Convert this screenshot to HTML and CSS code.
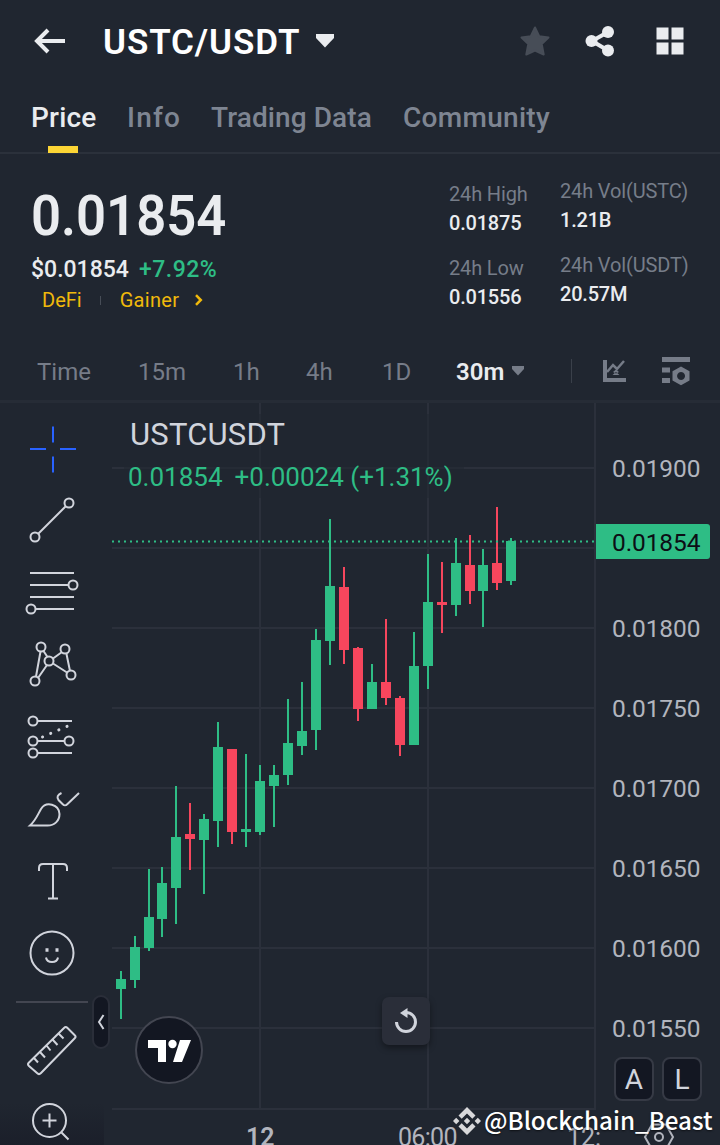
FILE: index.html
```
<!DOCTYPE html>
<html lang="en">
<head>
    <meta charset="UTF-8">
    <meta name="viewport" content="width=device-width, initial-scale=1.0">
    <link rel="stylesheet" href="styles.css">
    <script src="chart.js" defer></script>
    <title>USTC/USDT</title>
</head>
<body>
    <header class="topbar">
        <svg class="back" width="32" height="26" viewBox="0 0 32 26"><path d="M14 2 3 13l11 11M3 13h28" fill="none" stroke="#eaecef" stroke-width="4"/></svg>
        <h1 class="pair">USTC/USDT</h1>
        <svg class="caret" width="20" height="16" viewBox="0 0 20 16"><path d="M1 1h18v4l-9 9.500-9-9.500z" fill="#eaecef"/></svg>
        <div class="actions">
            <svg width="32" height="32" viewBox="0 0 32 32"><path d="M16 2.500l4.200 8.700 9.300 1.300-6.800 6.500 2 10.500L16 25.500l-8.700 4 2-10.500-6.800-6.500 9.300-1.300z" fill="#474d57" stroke="#474d57" stroke-width="2" stroke-linejoin="round"/></svg>
            <svg width="32" height="32" viewBox="0 0 32 32"><path d="M24 7 8 16l16 9.500" fill="none" stroke="#eaecef" stroke-width="4"/><g fill="#eaecef"><circle cx="24" cy="7" r="6"/><circle cx="7.500" cy="16" r="6"/><circle cx="24" cy="25.500" r="6"/></g></svg>
            <svg width="28" height="28" viewBox="0 0 28 28"><path d="M0.500 0.500h12v12h-12zM15.500 0.500h12v12h-12zM0.500 15.500h12v12h-12zM15.500 15.500h12v12h-12z" fill="#eaecef"/></svg>
        </div>
    </header>

    <nav class="tabs">
        <a class="tab active">Price</a>
        <a class="tab info">Info</a>
        <a class="tab trading">Trading Data</a>
        <a class="tab community">Community</a>
    </nav>

    <section class="summary">
        <div class="quote">
            <div class="last">0.01854</div>
            <div class="fiat"><span class="usd">$0.01854</span><span class="change">+7.92%</span></div>
            <div class="tags">
                <span class="defi">DeFi</span>
                <i></i>
                <span class="gainer">Gainer</span>
                <svg width="9" height="12" viewBox="0 0 9 12"><path d="M2 1.200 6.800 6 2 10.800" fill="none" stroke="#f0b90b" stroke-width="2.500"/></svg>
            </div>
        </div>
        <dl class="stats range">
            <dt>24h High</dt><dd>0.01875</dd>
            <dt>24h Low</dt><dd>0.01556</dd>
        </dl>
        <dl class="stats volume">
            <dt>24h Vol(USTC)</dt><dd>1.21B</dd>
            <dt>24h Vol(USDT)</dt><dd>20.57M</dd>
        </dl>
    </section>

    <nav class="intervals">
        <span class="time">Time</span>
        <span class="m15">15m</span>
        <span class="h1">1h</span>
        <span class="h4">4h</span>
        <span class="d1">1D</span>
        <span class="m30">30m</span>
        <svg class="more" width="14" height="12" viewBox="0 0 14 12"><path d="M1 1h12v3l-6 6.500-6-6.500z" fill="#767c88"/></svg>
        <i></i>
        <svg class="style" width="24" height="26" viewBox="0 0 24 26"><path d="M2 2v20h21" fill="none" stroke="#767c88" stroke-width="4"/><path d="M4 14l6-7 4 4 7-8" fill="none" stroke="#767c88" stroke-width="2.500"/><path d="M13 11.500l3 2.500-3 1.500-3-1.500zM9.500 17h7L13 14z" fill="#767c88"/></svg>
        <svg width="30" height="30" viewBox="0 0 30 30"><path d="M1 3.500h28M1 14h8M1 24.500h8" stroke="#767c88" stroke-width="5"/><path d="M20 10.500l8.500 4.700v9.300L20 29.200l-8.500-4.700v-9.300zM20 16a4 4 0 1 0 .1 0z" fill="#767c88" fill-rule="evenodd"/></svg>
    </nav>

    <main class="chart">
        <aside class="tools">
            <svg viewBox="0 0 56 72"><path d="M28 12.500v16M28 42.500v16M5 35h16M35 35h16" stroke="#2962ff" stroke-width="2"/></svg>
            <svg viewBox="0 0 56 72"><path d="M13.500 47.500 40.500 20.500"/><circle cx="10" cy="51" r="4.500"/><circle cx="44" cy="17" r="4.500"/></svg>
            <svg viewBox="0 0 56 72"><path d="M5 15h44M5 27h38M5 39h44M10 51h39"/><circle cx="48" cy="27" r="4.500"/><circle cx="6" cy="51" r="4.500"/></svg>
            <svg viewBox="0 -2 56 72"><path d="M15.500 19.500 11 44.500M18.500 19l4 6M13 46 22 33M28 26.500 37 20M41.500 22l3.500 17M28 31.500 42 40.500"/><circle cx="16" cy="15" r="4.500"/><circle cx="40" cy="17" r="4.500"/><circle cx="24" cy="29" r="4.500"/><circle cx="10" cy="49" r="4.500"/><circle cx="46" cy="43" r="4.500"/></svg>
            <svg viewBox="0 -2 56 72"><path d="M12.500 17H47M12.500 37h27M12.500 49H47"/><path d="M17.500 33 45 21" stroke-width="3" stroke-linecap="round" stroke-dasharray="0.100 8.800"/><circle cx="8" cy="17" r="4.500"/><circle cx="8" cy="37" r="4.500"/><circle cx="44" cy="37" r="4.500"/><circle cx="8" cy="49" r="4.500"/></svg>
            <svg viewBox="0 -2 56 72"><path d="M5 49.500C11 44 13 38 16 33c5-8 18-5 18.500 5 0 7-5 11.500-12 11.500zM36.500 17c-4 2-5 4-3 7l4 4c2 2 3 2 5 0L54 17"/></svg>
            <svg viewBox="0 1 56 72"><path d="M14 26v-3c0-3 1-4 4-4h20c3 0 4 1 4 4v3M28 19v34M23 53.500h10"/></svg>
            <svg viewBox="0 1 56 72"><circle cx="27" cy="36" r="21.500"/><path d="M21 40.500c1 6 11 6 12 0"/><path d="M20.500 33h3M30.500 33h3" stroke-width="3.500"/></svg>
            <hr>
            <svg class="ruler" viewBox="0 0 56 72"><path d="M4.500 43 40 8c1.500-1.500 2-1.500 3.500 0l7 7c1.500 1.500 1.500 2 0 3.500L17 53c-1.500 1.500-2.500 1.500-4 0l-8-7c-1-1-1.500-2-.5-3zM10 38l4 4.500M16 32l5 5.500M22.500 25.500l4 5M28.500 19.500l5 5.500M34.500 13.500l5 5"/></svg>
            <svg class="zoom" viewBox="0 0 56 56"><circle cx="24.500" cy="21.500" r="16.500"/><path d="M24.500 14.500v14M17.500 21.500h14M36.500 33.500l7 7"/></svg>
        </aside>

        <section class="plot">
            <svg class="series" id="series" width="484" height="742" viewBox="112 403 484 742"></svg>
            <div class="legend">
                <div class="symbol">USTCUSDT</div>
                <div class="values"><span>0.01854</span><span class="delta">+0.00024 (+1.31%)</span></div>
            </div>
            <span class="tick day">12</span>
            <span class="tick six">06:00</span>
        </section>

        <aside class="axis">
            <span>0.01900</span>
            <span></span>
            <span>0.01800</span>
            <span>0.01750</span>
            <span>0.01700</span>
            <span>0.01650</span>
            <span>0.01600</span>
            <span>0.01550</span>
            <div class="modes"><button>A</button><button>L</button></div>
            <b class="current">0.01854</b>
        </aside>

        <div class="handle"><svg width="8" height="16" viewBox="0 0 8 16"><path d="M6.500 1 2 8l4.500 7" fill="none" stroke="#d1d4dc" stroke-width="2"/></svg></div>
        <div class="brand"><svg width="44" height="24" viewBox="0 0 44 24"><path d="M0 1h18v22H10V9H0zM32 1h11l-9 22h-9z" fill="#fff"/><circle cx="24.500" cy="5" r="4.200" fill="#fff"/></svg></div>
        <div class="reset"><svg width="24" height="26" viewBox="0 0 24 26"><path d="M2.500 14a9.500 9.500 0 1 0 9.500-9.500" fill="none" stroke="#d1d4dc" stroke-width="3"/><path d="M13.500 0v10L6 5z" fill="#d1d4dc"/></svg></div>
        <span class="tick noon">12:</span>
        <svg class="gear" width="32" height="32" viewBox="0 0 32 32"><path d="M9 3.500h14L30 16l-7 12.500H9L2 16z" fill="none" stroke="#b2b5be" stroke-width="2"/><circle cx="16" cy="16" r="4" fill="none" stroke="#b2b5be" stroke-width="2"/></svg>
        <div class="watermark">
            <svg width="28" height="28" viewBox="0 0 28 28"><path d="M14 0l8.500 8.500-3.200 3.200L14 6.400l-5.300 5.300-3.200-3.200zM14 28l8.500-8.500-3.200-3.200L14 21.600l-5.300-5.300-3.200 3.200zM14 10.800l3.200 3.200-3.200 3.200-3.200-3.200zM3.200 10.800 6.400 14l-3.200 3.200L0 14zM24.800 10.800 28 14l-3.200 3.200-3.200-3.200z" fill="#d8d8da"/></svg>
            <span>@Blockchain_Beast</span>
        </div>
    </main>
</body>
</html>
```
FILE: styles.css
```
html, body {
    margin: 0;
    padding: 0;
    background-color: #202630;
    color: #eaecef;
    font-family: Roboto, sans-serif;
}
body {
    width: 720px;
    height: 1145px;
    overflow: hidden;
}
svg {
    display: block;
    flex: none;
}
.topbar {
    display: flex;
    align-items: center;
    box-sizing: border-box;
    height: 82px;
    padding: 0 36px 0 34px;
}
.back {
    margin-top: -1px;
}
.pair {
    width: 201px;
    margin: 4px 0 0 37px;
    font-size: 35px;
    font-weight: 600;
    line-height: 40px;
    letter-spacing: 0.9px;
    color: #fff;
}
.caret {
    margin-left: 11px;
}
.actions {
    display: flex;
    align-items: center;
    margin: -1px 0 0 auto;
    gap: 33px;
}
.actions svg:last-child {
    margin-left: 7px;
}

.tabs {
    display: flex;
    box-sizing: border-box;
    height: 72px;
    padding-left: 31px;
    border-bottom: 2px solid #2b313b;
    font-size: 28px;
    font-weight: 500;
    line-height: 71px;
}
.tab {
    height: 70px;
    white-space: nowrap;
    color: #7e8592;
}
.tab.active {
    width: 96px;
    color: #eaecef;
    letter-spacing: 0.2px;
}
.tab.active::after {
    content: "";
    display: block;
    width: 30px;
    height: 7px;
    margin: -7px 0 0 17px;
    background-color: #fcd535;
}
.info {
    width: 84px;
    letter-spacing: 1.2px;
}
.trading {
    width: 192px;
    letter-spacing: 0.1px;
}
.community {
    letter-spacing: 0.3px;
}

.summary {
    display: flex;
    height: 184px;
}
.quote {
    width: 418px;
    padding: 29px 0 0 31px;
}
.last {
    width: 220px;
    height: 66px;
    font-size: 56px;
    font-weight: 600;
    line-height: 66px;
    transform: scaleX(0.94);
    transform-origin: 0 0;
}
.fiat {
    display: flex;
    gap: 10px;
    height: 32px;
    padding-top: 5px;
    font-size: 23px;
    font-weight: 500;
    line-height: 32px;
}
.change {
    color: #2ebd85;
    letter-spacing: 0.5px;
}
.tags {
    display: flex;
    align-items: center;
    height: 28px;
    padding-left: 11px;
    font-size: 20px;
    color: #f0b90b;
}
.tags i {
    width: 1px;
    height: 9px;
    margin: 0 19px 0 18px;
    background-color: #474d57;
}
.gainer {
    letter-spacing: 0.3px;
}
.tags svg {
    margin-left: 15px;
}
.stats {
    margin: 0;
    padding-top: 23px;
    font-size: 20px;
    line-height: 29px;
    white-space: nowrap;
}
.range {
    width: 111px;
    padding-top: 26px;
}
.stats dt {
    color: #767d89;
    letter-spacing: -0.15px;
}
.stats dd {
    margin: 0 0 16px;
    font-weight: 500;
    letter-spacing: -0.2px;
}

.intervals {
    display: flex;
    align-items: center;
    box-sizing: border-box;
    height: 65px;
    padding: 4px 0 0 37px;
    border-bottom: 3px solid #262c36;
    font-size: 24px;
    color: #767c88;
}
.intervals span {
    padding-top: 2px;
}
.time {
    width: 101px;
}
.m15 {
    width: 95px;
}
.h1 {
    width: 73px;
}
.h4 {
    width: 76px;
}
.d1 {
    width: 74px;
}
.m30 {
    width: 55px;
    color: #eaecef;
    font-weight: 600;
}
.intervals i {
    width: 1px;
    height: 24px;
    margin: 0 31px 0 46px;
    background-color: #3a404a;
}
.style {
    margin-right: 34px;
}

.chart {
    position: relative;
    display: flex;
    height: 742px;
}
.tools {
    width: 112px;
    box-sizing: border-box;
    padding: 11px 0 0 25px;
    background: linear-gradient(to bottom, transparent 700px, #1b1f2a 742px) no-repeat 0 0 / 104px 742px;
}
.tools svg {
    width: 56px;
    height: 72px;
    fill: none;
    stroke: #d1d4dc;
    stroke-width: 2;
}
.tools hr {
    width: 72px;
    height: 2px;
    margin: 11px 0 17px -9px;
    border: 0;
    background-color: #434651;
}
.tools svg.ruler {
    margin: 0 0 7px -1px;
}
.tools svg.zoom {
    height: 56px;
}

.plot {
    position: relative;
    width: 484px;
}
.legend {
    position: absolute;
    top: 11px;
    left: 12px;
    width: 340px;
    color: #d1d4dc;
    background-color: rgba(32, 38, 48, 0.5);
}
.symbol {
    padding-left: 6px;
    font-size: 31px;
    line-height: 42px;
    letter-spacing: 0.2px;
}
.values {
    display: flex;
    gap: 12px;
    padding-left: 4px;
    font-size: 26px;
    line-height: 42px;
    color: #2ebd85;
}
.tick {
    position: absolute;
    top: 720px;
    font-size: 25px;
    line-height: 30px;
    color: #b2b5be;
}
.day {
    left: 134px;
    font-weight: 600;
}
.six {
    left: 286px;
    letter-spacing: -0.7px;
}
.noon {
    left: 567px;
}

.axis {
    position: relative;
    box-sizing: border-box;
    width: 124px;
    padding: 26px 0 0 16px;
    font-size: 24.500px;
    color: #b2b5be;
}
.axis > span {
    display: block;
    height: 80px;
    line-height: 80px;
    letter-spacing: -0.1px;
}
.current {
    position: absolute;
    top: 121px;
    left: 0;
    width: 98px;
    height: 35px;
    padding-left: 16px;
    border-radius: 0 3px 3px 0;
    background-color: #2ebd85;
    color: #0c0e15;
    font-weight: 400;
    line-height: 37px;
    letter-spacing: -0.1px;
}
.modes {
    display: flex;
    gap: 8px;
    margin: -12px 0 0 2px;
}
.modes button {
    width: 40px;
    height: 44px;
    padding: 0;
    border: 2px solid #363a45;
    border-radius: 8px;
    background-color: #131722;
    color: #d1d4dc;
    font: 28px Roboto, sans-serif;
}

.handle, .brand, .reset {
    position: absolute;
    display: flex;
    align-items: center;
    justify-content: center;
    box-sizing: border-box;
}
.handle {
    top: 592px;
    left: 92px;
    width: 18px;
    height: 54px;
    border: 2px solid #2a2e39;
    border-radius: 9px;
    background-color: #131722;
}
.brand {
    top: 613px;
    left: 135px;
    width: 68px;
    height: 68px;
    border: 2px solid #434651;
    border-radius: 50%;
    background-color: #131722;
}
.brand svg {
    margin: 2px 0 0 2px;
}
.reset {
    top: 594px;
    left: 382px;
    width: 48px;
    height: 48px;
    border-radius: 7px;
    background-color: #2a2e39;
    box-shadow: 0 3px 6px rgba(0, 0, 0, 0.4);
}
.gear {
    position: absolute;
    top: 718px;
    left: 643px;
}
.watermark {
    position: absolute;
    top: 701px;
    left: 453px;
    display: flex;
    align-items: center;
    gap: 3px;
    height: 34px;
    color: #fff;
    font-family: "Noto Sans CJK SC", sans-serif;
    font-size: 24.200px;
    font-weight: 500;
    line-height: 30px;
    text-shadow: 0 1px 2px rgba(0, 0, 0, 0.6);
    white-space: nowrap;
}
.watermark span {
    margin-top: -3px;
}
```
FILE: chart.js
```
// center x, wick top, wick bottom, body top, body bottom, direction
const candles = [
    [121, 971, 1019, 979, 989, "up"],
    [135, 936, 988, 947, 980, "up"],
    [149, 869, 951, 917, 948, "up"],
    [162, 867, 937, 883, 919, "up"],
    [176, 786, 924, 837, 888, "up"],
    [190, 803, 870, 834, 839, "down"],
    [204, 814, 894, 819, 840, "up"],
    [218, 722, 847, 747, 821, "up"],
    [232, 749, 844, 749, 832, "down"],
    [246, 754, 847, 829, 832, "up"],
    [260, 765, 835, 781, 832, "up"],
    [274, 765, 827, 775, 786, "up"],
    [288, 699, 785, 743, 775, "up"],
    [302, 682, 755, 731, 746, "up"],
    [316, 629, 750, 640, 730, "up"],
    [330, 519, 665, 586, 641, "up"],
    [344, 567, 664, 587, 650, "down"],
    [358, 647, 721, 648, 709, "down"],
    [372, 664, 709, 682, 709, "up"],
    [386, 619, 705, 682, 698, "down"],
    [400, 696, 756, 698, 745, "down"],
    [414, 632, 745, 666, 745, "up"],
    [428, 554, 689, 602, 666, "up"],
    [442, 562, 633, 602, 605, "down"],
    [456, 538, 616, 563, 605, "up"],
    [470, 535, 604, 565, 591, "down"],
    [483, 549, 627, 565, 591, "up"],
    [497, 507, 590, 563, 583, "down"],
    [511, 538, 585, 541, 581, "up"]
];
const colors = { up: "#2ebd85", down: "#f6465d" };
const grid = "#2b303b";

function rect(x, y, w, h, fill) {
    return `<rect x="${x}" y="${y}" width="${w}" height="${h}" fill="${fill}"/>`;
}

let out = "";
for (let y = 467; y <= 1027; y += 80) {
    out += rect(112, y, 484, 2, grid);
}
for (const x of [259, 427, 594]) {
    out += rect(x, 401, 2, 707, grid);
}
out += rect(112, 1108, 484, 2, grid);
for (const [x, high, low, top, bottom, dir] of candles) {
    out += rect(x - 1, high, 2, low - high, colors[dir]);
    out += rect(x - 5, top, 10, bottom - top, colors[dir]);
}
out += '<path d="M112 541.500h482" stroke="#2ebd85" stroke-width="2" stroke-dasharray="2 4"/>';
document.querySelector("#series").innerHTML = out;
```
